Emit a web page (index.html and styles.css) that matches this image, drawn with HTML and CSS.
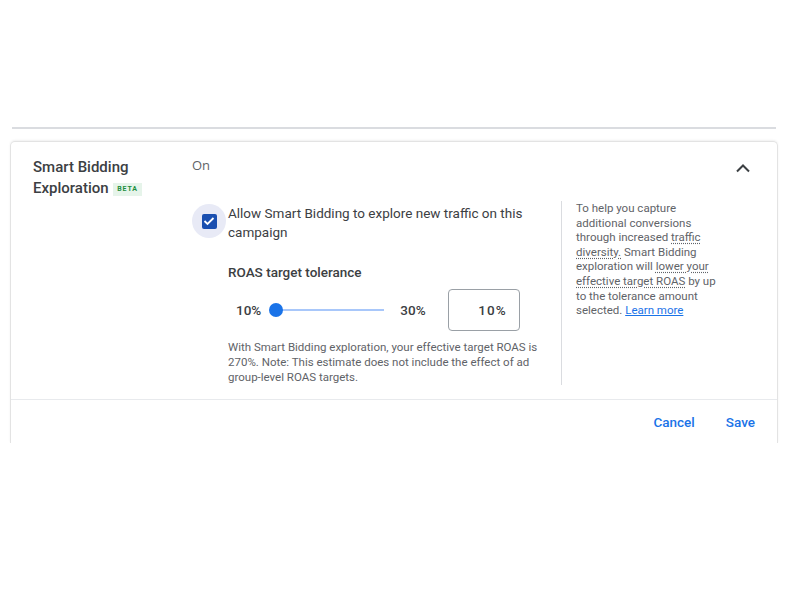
FILE: index.html
```html
<!DOCTYPE html>
<html lang="en">
<head>
  <meta charset="UTF-8" />
  <meta name="viewport" content="width=device-width, initial-scale=1" />
  <title>Smart Bidding Exploration</title>
  <link rel="stylesheet" href="styles.css">
</head>
<body>
  <div class="page">
    <div class="topline"></div>

    <div class="card">
      <div class="card-body">
        <div class="setting-title">
          Smart Bidding<br>Exploration <span class="beta">BETA</span>
        </div>

        <div class="setting-main">
          <div class="main-head">
            <span class="state">On</span>
            <svg class="chevron" width="16" height="10" viewBox="0 0 16 10">
              <path d="M2 8.5 L8 2.5 L14 8.5" fill="none" stroke="#3c4043" stroke-width="2"/>
            </svg>
          </div>

          <div class="options">
            <div class="opt-left">
              <div class="check-wrap">
                <div class="check">
                  <svg width="12" height="10" viewBox="0 0 12 10">
                    <path d="M1.5 5 L4.5 8 L10.5 2" fill="none" stroke="#fff" stroke-width="1.8"/>
                  </svg>
                </div>
              </div>
              <div class="opt-content">
                <div class="check-label">Allow Smart Bidding to explore new traffic on this campaign</div>

                <div class="roas-title">ROAS target tolerance</div>
                <div class="slider-row">
                  <span class="range-label">10%</span>
                  <div class="slider">
                    <div class="thumb"></div>
                  </div>
                  <span class="range-label">30%</span>
                  <div class="value-box">10%</div>
                </div>
                <p class="note">With Smart Bidding exploration, your effective target ROAS is 270%. Note: This estimate does not include the effect of ad group-level ROAS targets.</p>
              </div>
            </div>

            <div class="help">
              To help you capture additional conversions through increased <span class="dotted">traffic diversity.</span> Smart Bidding exploration will <span class="dotted">lower your effective target ROAS</span> by up to the tolerance amount selected. <a href="#" class="link">Learn more</a>
            </div>
          </div>
        </div>
      </div>

      <div class="card-footer">
        <button class="text-btn">Cancel</button>
        <button class="text-btn">Save</button>
      </div>
    </div>
  </div>
</body>
</html>
```

FILE: styles.css
```css
body {
  margin: 0;
  background: #fff;
  font-family: Roboto, "Liberation Sans", Arial, sans-serif;
  color: #3c4043;
}

.page {
  padding: 127px 8px 0 10px;
}

.topline {
  height: 0;
  border-top: 2px solid #dadce0;
  margin: 0 2px;
}

.card {
  margin-top: 12px;
  border: 1px solid #e3e3e3;
  border-bottom: none;
  border-radius: 5px 5px 0 0;
  box-shadow: 0 -1px 2px rgba(60, 64, 67, 0.08);
}

.card-body {
  display: flex;
  padding: 15px 26px 14px 22px;
}

/* Title column */
.setting-title {
  width: 159px;
  flex-shrink: 0;
  font-family: Roboto, sans-serif;
  font-size: 15px;
  font-weight: 500;
  line-height: 21px;
  color: #3c4043;
}

.beta {
  display: inline-block;
  vertical-align: 2px;
  background: #e6f4ea;
  color: #1e8e3e;
  font-family: Roboto, sans-serif;
  font-size: 7px;
  font-weight: 700;
  letter-spacing: 0.8px;
  line-height: 13px;
  padding: 0 4px;
  margin-left: 1px;
}

.setting-main {
  flex-grow: 1;
}

.main-head {
  display: flex;
  justify-content: space-between;
  align-items: flex-start;
}

.state {
  font-family: "Open Sans", Roboto, sans-serif;
  font-size: 13px;
  color: #5f6368;
  line-height: 17px;
}

.chevron {
  margin-top: 6px;
}

.options {
  display: flex;
  margin-top: 27px;
}

.opt-left {
  display: flex;
  width: 369px;
  flex-shrink: 0;
}

.check-wrap {
  width: 34px;
  height: 34px;
  border-radius: 50%;
  background: #e8eaf6;
  display: flex;
  align-items: center;
  justify-content: center;
  margin-top: 3px;
  margin-right: 2px;
  flex-shrink: 0;
}

.check {
  width: 15px;
  height: 15px;
  border-radius: 2px;
  background: #1a4fb0;
  display: flex;
  align-items: center;
  justify-content: center;
}

.opt-content {
  flex-grow: 1;
  padding-top: 3px;
}

.check-label {
  font-size: 13.5px;
  line-height: 19px;
  color: #3c4043;
  width: 300px;
}

.roas-title {
  margin-top: 21px;
  font-family: Roboto, sans-serif;
  font-size: 13.5px;
  font-weight: 500;
  color: #3c4043;
  line-height: 18px;
}

.slider-row {
  display: flex;
  align-items: center;
  margin-top: 8px;
}

.range-label {
  font-family: Roboto, sans-serif;
  font-size: 13.5px;
  font-weight: 500;
  color: #3c4043;
}

.slider-row .range-label:first-child {
  margin-left: 8px;
}

.slider {
  position: relative;
  width: 113px;
  height: 2px;
  background: #a8c7fa;
  margin: 0 16px 0 10px;
}

.thumb {
  position: absolute;
  left: -2px;
  top: -6px;
  width: 14px;
  height: 14px;
  border-radius: 50%;
  background: #1a73e8;
}

.value-box {
  width: 58px;
  height: 40px;
  margin-left: 22px;
  border: 1px solid #9aa0a6;
  border-radius: 4px;
  padding-right: 12px;
  text-align: right;
  line-height: 40px;
  font-family: Roboto, sans-serif;
  font-size: 13.5px;
  font-weight: 500;
  letter-spacing: 1px;
  color: #3c4043;
}

.note {
  margin: 9px 0 0;
  font-size: 11.5px;
  line-height: 14.8px;
  color: #5f6368;
  width: 320px;
}

/* Right help column */
.help {
  border-left: 1px solid #dadce0;
  padding-left: 14px;
  width: 146px;
  font-size: 11.5px;
  line-height: 14.6px;
  color: #5f6368;
  height: 184px;
}

.dotted {
  text-decoration: underline dotted #5f6368;
  text-underline-offset: 2px;
}

.link {
  color: #1a73e8;
  text-decoration: underline;
}

.card-footer {
  border-top: 1px solid #e8eaed;
  height: 43px;
  display: flex;
  justify-content: flex-end;
  align-items: center;
  gap: 15px;
  padding-right: 14px;
}

.text-btn {
  border: none;
  background: none;
  padding: 4px 8px;
  font-family: Roboto, sans-serif;
  font-size: 13.5px;
  font-weight: 500;
  color: #1a73e8;
  cursor: pointer;
}
```
